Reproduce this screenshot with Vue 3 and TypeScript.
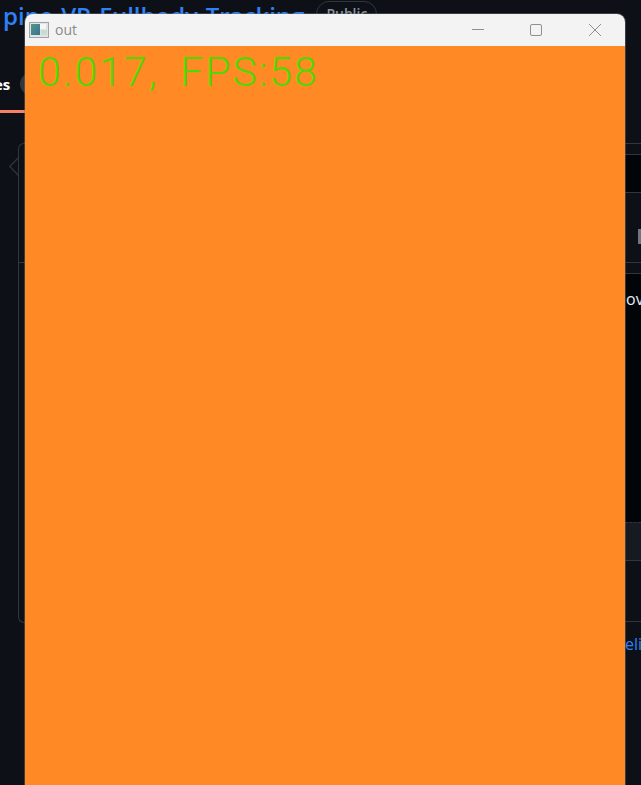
<script setup lang="ts">
const rightRows = [
  { h: 11, cls: 'dark', text: '' },
  { h: 38, cls: 'black', text: '' },
  { h: 70, cls: 'dark handle', text: '' },
  { h: 11, cls: 'dark', text: '' },
  { h: 248, cls: 'black ov', text: 'ov' },
  { h: 39, cls: 'raised dashed', text: '' },
  { h: 61, cls: 'dark', text: '' },
  { h: 163, cls: 'dark link', text: 'elin' }
]
</script>

<template>
  <div class="desktop">
    <header class="repo-head">
      <h1 class="repo-title">pipe-VR-Fullbody-Tracking</h1>
      <span class="public">Public</span>
    </header>
    <nav class="tabs">
      <span class="tab-label">es</span>
      <span class="counter"></span>
    </nav>
    <div class="tab-rule"></div>
    <main class="page">
      <aside class="left">
        <svg class="chevron" width="10" height="20" viewBox="0 0 10 20" aria-hidden="true">
          <path d="M9.5 0.5 L0.8 9.5 L9.5 18.5" fill="none" stroke="#30363d" stroke-width="1.2" />
        </svg>
        <div class="left-card"><div class="left-divider"></div></div>
      </aside>
      <section class="right">
        <div v-for="(row, i) in rightRows" :key="i" class="row" :class="row.cls" :style="{ height: row.h + 'px' }">{{ row.text }}</div>
      </section>
    </main>

    <div class="window">
      <div class="titlebar">
        <svg class="app-icon" width="20" height="16" viewBox="0 0 20 16" aria-hidden="true">
          <defs>
            <linearGradient id="pic" x1="0" y1="0" x2="1" y2="1">
              <stop offset="0" stop-color="#4f9a86" />
              <stop offset="1" stop-color="#3c6f98" />
            </linearGradient>
          </defs>
          <rect x="0.5" y="0.5" width="19" height="15" fill="#dfe5e5" stroke="#a3a3a3" />
          <rect x="2" y="2" width="9" height="11" fill="url(#pic)" />
          <rect x="11" y="2" width="6" height="5" fill="#f4f8f4" />
          <rect x="12" y="8" width="6" height="5" fill="#c8dccf" />
        </svg>
        <span class="win-title">out</span>
        <div class="controls">
          <svg width="14" height="14" viewBox="0 0 14 14" aria-hidden="true"><path d="M0 6.5 H12" stroke="#8f8f8f" stroke-width="1" /></svg>
          <svg width="14" height="14" viewBox="0 0 14 14" aria-hidden="true"><rect x="0.5" y="1.5" width="11" height="11" rx="1.5" fill="none" stroke="#8f8f8f" stroke-width="1" /></svg>
          <svg width="14" height="14" viewBox="0 0 14 14" aria-hidden="true"><path d="M1 1 L13 13 M13 1 L1 13" stroke="#8f8f8f" stroke-width="1" /></svg>
        </div>
      </div>
      <div class="canvas">
        <div class="fps">0.017, FPS:58</div>
      </div>
    </div>
  </div>
</template>

<style>
html, body { margin: 0; background: #0d1117; }
</style>

<style scoped>
.desktop {
  position: relative;
  width: 641px;
  height: 785px;
  overflow: hidden;
  background: #0d1117;
  font-family: "Open Sans", "Liberation Sans", sans-serif;
}
.repo-head {
  display: flex;
  align-items: center;
  gap: 12px;
  height: 32px;
  padding-left: 3px;
}
.repo-title {
  margin: 0;
  font-size: 24px;
  font-weight: 600;
  line-height: 32px;
  color: #2f81f7;
  white-space: nowrap;
}
.public {
  display: block;
  width: 61px;
  height: 26px;
  margin-top: -4px;
  box-sizing: border-box;
  border: 1px solid #30363d;
  border-radius: 14px;
  color: #8b949e;
  font-size: 14px;
  font-weight: 600;
  line-height: 24px;
  text-align: center;
}
.tabs {
  display: flex;
  align-items: center;
  height: 78px;
  padding-top: 26px;
  box-sizing: border-box;
  gap: 10px;
}
.tab-label {
  margin-left: -6px;
  color: #fff;
  font-size: 15px;
  font-weight: 700;
}
.counter {
  width: 22px;
  height: 22px;
  border-radius: 50%;
  background: #30363d;
}
.tab-rule {
  width: 25px;
  height: 3px;
  background: #f78166;
}
.page {
  display: flex;
  justify-content: space-between;
  padding-top: 30px;
}
.left {
  position: relative;
  width: 25px;
  padding-left: 18px;
  box-sizing: border-box;
}
.chevron {
  position: absolute;
  left: 9px;
  top: 14px;
}
.left-card {
  height: 478px;
  border: 1px solid #30363d;
  border-right: 0;
  border-radius: 6px 0 0 6px;
}
.left-divider {
  margin-top: 118px;
  height: 1px;
  background: #30363d;
}
.right {
  width: 16px;
  border-top: 1px solid #30363d;
  font-size: 16px;
  line-height: 20px;
}
.row {
  box-sizing: border-box;
  overflow: hidden;
  white-space: nowrap;
  border-bottom: 1px solid #30363d;
}
.row:last-child { border-bottom: 0; }
.dark { background: #0d1117; }
.black { background: #010409; }
.raised { background: #161b22; }
.dashed { border-top: 1px dashed #30363d; }
.ov { color: #e6edf3; padding: 15px 0 0 1px; border-bottom: 0; }
.link { color: #2f81f7; padding: 12px 0 0 0; }
.handle { position: relative; }
.handle::after {
  content: "";
  position: absolute;
  left: 13px;
  top: 36px;
  width: 3px;
  height: 15px;
  background: #6e7681;
}
.window {
  position: absolute;
  left: 25px;
  top: 14px;
  width: 600px;
  height: 771px;
  display: flex;
  flex-direction: column;
  border-radius: 8px 8px 0 0;
  overflow: hidden;
  box-shadow: 0 0 0 1px rgba(110, 118, 129, 0.45);
}
.titlebar {
  flex: none;
  display: flex;
  align-items: center;
  height: 32px;
  background: #f3f3f3;
  padding-left: 4px;
}
.app-icon { margin-right: 6px; }
.win-title {
  color: #8a8a8a;
  font-family: "Open Sans", sans-serif;
  font-size: 14px;
  padding-bottom: 2px;
}
.controls {
  display: flex;
  gap: 44px;
  margin-left: auto;
  margin-right: 23px;
}
.canvas {
  flex: 1;
  background: #ff8a25;
  padding: 0 0 0 13px;
}
.fps {
  color: #4fd900;
  font-family: "Roboto", sans-serif;
  font-weight: 300;
  font-size: 41px;
  letter-spacing: 2px;
  word-spacing: 9.5px;
  line-height: 52px;
  white-space: pre;
}
</style>
